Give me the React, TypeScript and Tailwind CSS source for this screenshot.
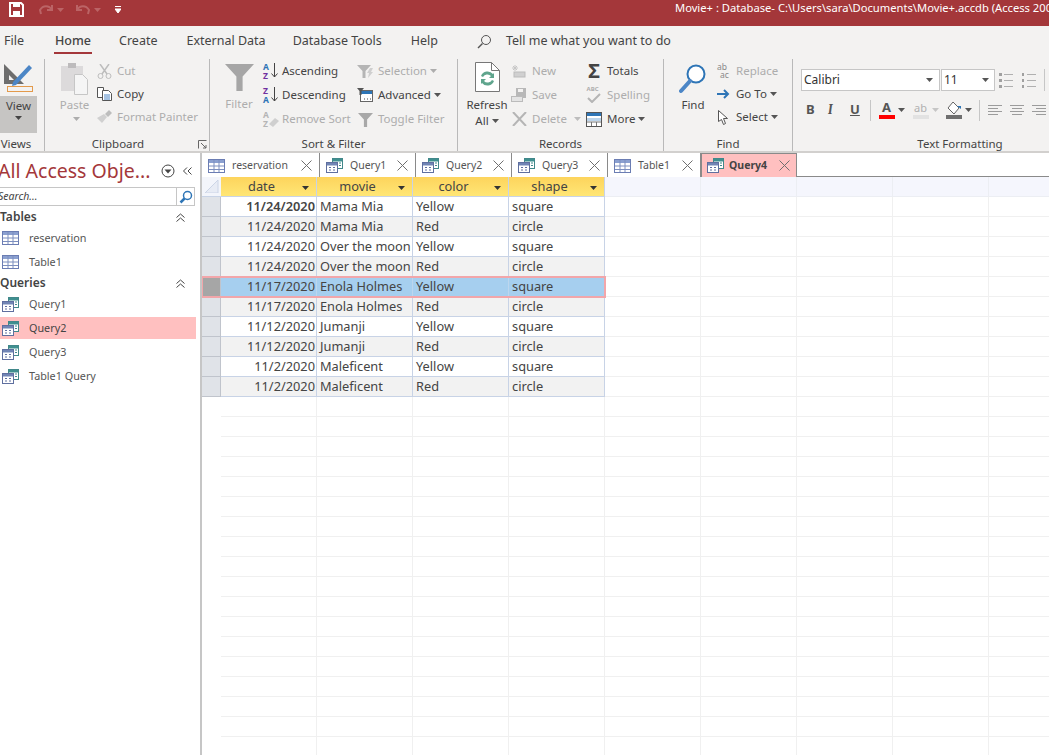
import React from 'react';

const Caret = ({ c = '#555' }: { c?: string }) => (
  <svg width="7" height="4" viewBox="0 0 7 4" className="ml-[3px] shrink-0"><path d="M0 0h7L3.500 4z" fill={c} /></svg>
);

const SaveIcon = () => (
  <svg width="15" height="15" viewBox="0 0 15 15" className="shrink-0"><path d="M1 1h11l2 2v11H1z" fill="none" stroke="#fff" strokeWidth="2" /><path d="M4 1h7v4H4z" fill="#fff" /><path d="M4 9h7v5H4z" fill="#fff" /></svg>
);

const TableIcon = () => (
  <svg width="17" height="14" viewBox="0 0 17 14" className="shrink-0">
    <rect x=".5" y=".5" width="16" height="13" fill="#fff" stroke="#6b7db3" />
    <rect x="1" y="1" width="15" height="3" fill="#8ba0d0" />
    <path d="M1 7h15M1 10.500h15M6 1v12M11 1v12" stroke="#7d8fbf" strokeWidth="1" fill="none" />
  </svg>
);

const QueryIcon = () => (
  <svg width="17" height="15" viewBox="0 0 17 15" className="shrink-0">
    <rect x="6.500" y=".5" width="10" height="10" fill="#fff" stroke="#41888a" />
    <rect x="7" y="1" width="9" height="2.500" fill="#3f8f8f" />
    <path d="M9 5h2M13 5h2M9 7.500h2M13 7.500h2" stroke="#41888a" />
    <rect x=".5" y="4.500" width="11" height="10" fill="#fff" stroke="#5f6f9f" />
    <rect x="1" y="5" width="10" height="2.500" fill="#7185b5" />
    <path d="M3 9.500h2M7 9.500h2M3 12h2M7 12h2" stroke="#5f6f9f" />
  </svg>
);

const CloseX = () => (
  <svg width="11" height="11" viewBox="0 0 11 11" className="shrink-0"><path d="M.5.5l10 10M10.500.5l-10 10" stroke="#6f6f6f" strokeWidth="1" fill="none" /></svg>
);

const AZ = ({ top, bot, arrow = true, faded = false }: { top: string; bot: string; arrow?: boolean; faded?: boolean }) => (
  <span className="relative ml-[3px] flex h-[18px] w-[15px] shrink-0 flex-col text-[8.500px] font-bold leading-[9px]">
    <span className={faded ? 'text-[#b5b5b5]' : top === 'A' ? 'text-[#2e75b6]' : 'text-[#7030a0]'}>{top}</span>
    <span className={faded ? 'text-[#b5b5b5]' : bot === 'A' ? 'text-[#2e75b6]' : 'text-[#7030a0]'}>{bot}</span>
    {arrow ? (
      <svg width="7" height="15" viewBox="0 0 7 15" className="absolute left-[8px] top-[1px]"><path d="M3.500 0v14M.5 10.500l3 3.500 3-3.500" stroke="#444" fill="none" /></svg>
    ) : (
      <svg width="10" height="9" viewBox="0 0 10 9" className="absolute left-[6px] top-[8px]"><path d="M0 6l6-6 4 3-6 6z" fill="#cfcfcf" /></svg>
    )}
  </span>
);

const Funnel = ({ size = 14, c = '#a6a6a6' }: { size?: number; c?: string }) => (
  <svg width={size} height={size} viewBox="0 0 14 14" className="shrink-0"><path d="M0 1h14L8.500 7v7h-3V7z" fill={c} /></svg>
);

const Row = ({ icon, label, disabled = false, caret = false }: { icon: React.ReactNode; label: string; disabled?: boolean; caret?: boolean }) => (
  <div className={`flex h-[24px] items-center gap-[4px] ${disabled ? 'text-[#adadad]' : 'text-[#444]'}`}>
    <span className="flex w-[18px] shrink-0 justify-center">{icon}</span>
    <span className="flex items-center whitespace-nowrap">
      {label}
      {caret && <Caret c={disabled ? '#adadad' : '#555'} />}
    </span>
  </div>
);

const Group = ({ label, w, children, launcher = false, labelPad = '' }: { label: string; w: string; children: React.ReactNode; launcher?: boolean; labelPad?: string }) => (
  <div className={`flex h-full shrink-0 flex-col border-r border-[#b9b9b9] ${w}`}>
    <div className="flex h-[77px] shrink-0">{children}</div>
    <div className={`relative flex h-[15px] shrink-0 items-center justify-center text-[11.500px] text-[#444] ${labelPad}`}>
      {label}
      {launcher && (
        <svg width="9" height="9" viewBox="0 0 9 9" className="absolute right-[2px] top-[4px]"><path d="M.5 8.500v-8h8M3 3l5 5M8 5v3H5" stroke="#666" fill="none" /></svg>
      )}
    </div>
  </div>
);

const rows: [string, string, string, string][] = [
  ['11/24/2020', 'Mama Mia', 'Yellow', 'square'],
  ['11/24/2020', 'Mama Mia', 'Red', 'circle'],
  ['11/24/2020', 'Over the moon', 'Yellow', 'square'],
  ['11/24/2020', 'Over the moon', 'Red', 'circle'],
  ['11/17/2020', 'Enola Holmes', 'Yellow', 'square'],
  ['11/17/2020', 'Enola Holmes', 'Red', 'circle'],
  ['11/12/2020', 'Jumanji', 'Yellow', 'square'],
  ['11/12/2020', 'Jumanji', 'Red', 'circle'],
  ['11/2/2020', 'Maleficent', 'Yellow', 'square'],
  ['11/2/2020', 'Maleficent', 'Red', 'circle'],
];

const tabs = [
  { n: 'reservation', w: 'w-[118px]', t: true },
  { n: 'Query1', w: 'w-[96px]' },
  { n: 'Query2', w: 'w-[96px]' },
  { n: 'Query3', w: 'w-[96px]' },
  { n: 'Table1', w: 'w-[93px]', t: true },
];

const NavItem = ({ label, table = false, active = false, h = 'h-[24px]' }: { label: string; table?: boolean; active?: boolean; h?: string }) => (
  <div className={`flex ${h} w-[196px] items-center gap-[10px] pl-[2px] text-[10.800px] ${active ? 'bg-[#ffc0c0] text-[#444]' : 'text-[#555]'}`}>
    {table ? <TableIcon /> : <QueryIcon />}
    <span>{label}</span>
  </div>
);

const Chevrons = () => (
  <svg width="9" height="9" viewBox="0 0 9 9" className="mr-[11px]"><path d="M.5 4.500l4-3.500 4 3.500M.5 8.500l4-3.500 4 3.500" fill="none" stroke="#444" /></svg>
);

const cols = [0, 1, 2, 3, 4];

export default function App() {
  return (
    <div className="flex h-[755px] w-[1049px] flex-col overflow-hidden bg-white font-['Noto_Sans','Open_Sans',sans-serif] text-[12px] text-[#444]">
      {/* Title bar */}
      <div className="flex h-[26px] shrink-0 items-start justify-between overflow-hidden bg-[#a4373a] pl-[9px]">
        <div className="flex items-center pt-[2px]">
          <SaveIcon />
          <svg width="16" height="13" viewBox="0 0 16 13" className="ml-[14px]"><path d="M14 2v5H9M14 7C11 2 5 2 2 7l1 4" fill="none" stroke="#bb6466" strokeWidth="2" /></svg>
          <Caret c="#bb6466" />
          <svg width="16" height="13" viewBox="0 0 16 13" className="ml-[11px]"><path d="M2 2v5h5M2 7c3-5 9-5 12 0l-1 4" fill="none" stroke="#bb6466" strokeWidth="2" /></svg>
          <Caret c="#bb6466" />
          <svg width="6" height="7" viewBox="0 0 6 7" className="ml-[14px]"><path d="M0 .5h6M0 3h6L3 7z" stroke="#fff" fill="#fff" strokeWidth="1" /></svg>
        </div>
        <div className="w-[374px] shrink-0 overflow-hidden whitespace-nowrap text-[11.200px] leading-[15px] text-white">Movie+ : Database- C:\Users\sara\Documents\Movie+.accdb (Access 2007 - 2016 file format)</div>
      </div>

      {/* Ribbon tabs */}
      <div className="flex h-[30px] shrink-0 items-center bg-[#f3f2f1] text-[12.500px] text-[#444]">
        <span className="ml-[4px]">File</span>
        <span className="relative ml-[31px] font-medium">Home<span className="absolute -bottom-[4px] -left-[1px] -right-[1px] h-[2px] bg-[#a4373a]" /></span>
        <span className="ml-[28px]">Create</span>
        <span className="ml-[29px]">External Data</span>
        <span className="ml-[27px]">Database Tools</span>
        <span className="ml-[29px]">Help</span>
        <svg width="15" height="15" viewBox="0 0 15 15" className="ml-[39px]"><circle cx="9" cy="6" r="4.500" fill="none" stroke="#555" /><path d="M5.500 9.500L1 14" stroke="#555" strokeWidth="1.500" /></svg>
        <span className="ml-[14px]">Tell me what you want to do</span>
      </div>

      {/* Ribbon */}
      <div className="flex h-[97px] shrink-0 overflow-hidden border-b-2 border-[#d2d0ce] bg-[#f3f2f1] pt-[3px] text-[11.500px]">
        <Group label="Views" w="w-[45px]" labelPad="pr-[12px]">
          <div className="flex w-[37px] flex-col items-center">
            <svg width="32" height="32" viewBox="0 0 32 32" className="-ml-[2px] mt-[3px] shrink-0">
              <path d="M2 2v20h20z" fill="#6d6d6d" /><path d="M7 13v5h5z" fill="#f3f2f1" />
              <path d="M11 20L27 3l3 3L14 23l-4 1z" fill="#4c86c6" />
              <rect x="5.500" y="24.500" width="25" height="5" fill="none" stroke="#e39a4b" />
            </svg>
            <div className="mt-[2px] flex h-[37px] w-[37px] shrink-0 flex-col items-center bg-[#c6c5c3] pt-[1px] text-[#444]">
              <span>View</span>
              <svg width="7" height="4" viewBox="0 0 7 4" className="mt-[2px]"><path d="M0 0h7L3.500 4z" fill="#444" /></svg>
            </div>
          </div>
        </Group>

        <Group label="Clipboard" w="w-[165px]" launcher labelPad="pr-[18px]">
          <div className="ml-[10px] flex w-[39px] flex-col items-center text-[#adadad]">
            <svg width="29" height="32" viewBox="0 0 29 32" className="mt-[4px] shrink-0">
              <rect x="1" y="3" width="22" height="25" fill="#dcdadb" /><rect x="8" y="0" width="8" height="5" fill="#bdbbbc" />
              <path d="M14.500 11.500h8l5 5v15h-13z" fill="#f5f5f5" stroke="#c6c6c6" />
            </svg>
            <span className="mt-[1px]">Paste</span>
            <span className="mt-[4px]"><Caret c="#adadad" /></span>
          </div>
          <div className="ml-[1px] flex flex-col">
            <Row disabled label="Cut" icon={<svg width="15" height="15" viewBox="0 0 15 15"><path d="M3 0l7 10M12 0L5 10" stroke="#bdbdbd" strokeWidth="1.500" /><circle cx="3.500" cy="12" r="2.500" fill="none" stroke="#bdbdbd" /><circle cx="11.500" cy="12" r="2.500" fill="none" stroke="#bdbdbd" /></svg>} />
            <div className="-mt-[1px]"><Row label="Copy" icon={<svg width="15" height="14" viewBox="0 0 15 14"><path d="M.5.5h6v10h-6z" fill="#fff" stroke="#555" /><path d="M5.500 3.500h6l3 3v7h-9z" fill="#fff" stroke="#555" /><path d="M7 8h6M7 10h6M7 12h6" stroke="#4c86c6" /></svg>} /></div>
            <div className="-mt-[1px]"><Row disabled label="Format Painter" icon={<svg width="16" height="14" viewBox="0 0 16 14"><path d="M1 8l5 5 5-6-3-3z" fill="#d0d0d0" /><path d="M9 4l4-4 3 3-4 4z" fill="#bdbdbd" /></svg>} /></div>
          </div>
        </Group>

        <Group label="Sort & Filter" w="w-[248px]">
          <div className="ml-[14px] flex w-[30px] flex-col items-center text-[#adadad]">
            <span className="mt-[3px] flex"><Funnel size={29} /></span>
            <span className="mt-[4px]">Filter</span>
          </div>
          <div className="ml-[6px] flex w-[95px] flex-col">
            <Row label="Ascending" icon={<AZ top="A" bot="Z" />} />
            <Row label="Descending" icon={<AZ top="Z" bot="A" />} />
            <Row disabled label="Remove Sort" icon={<AZ top="A" bot="Z" arrow={false} faded />} />
          </div>
          <div className="ml-[1px] flex flex-col">
            <Row disabled caret label="Selection" icon={<span className="relative block h-[14px] w-[16px]"><Funnel c="#b5b5b5" /><svg width="6" height="10" viewBox="0 0 6 10" className="absolute left-[10px] top-[4px]"><path d="M3 0L0 5h2L1 10l5-6H4l2-4z" fill="#cfcfcf" /></svg></span>} />
            <Row caret label="Advanced" icon={<svg width="16" height="15" viewBox="0 0 16 15"><rect x="3.500" y="2.500" width="12" height="11" fill="#fff" stroke="#666" /><rect x="4" y="3" width="11" height="3" fill="#2e75b6" /><path d="M0 0h7L4.500 3v4h-2V3z" fill="#555" /><path d="M7 11h1M10 11h1M13 11h1" stroke="#444" /></svg>} />
            <Row disabled label="Toggle Filter" icon={<Funnel size={15} c="#a8a8a8" />} />
          </div>
        </Group>

        <Group label="Records" w="w-[206px]">
          <div className="ml-[10px] flex w-[38px] flex-col items-center">
            <svg width="25" height="30" viewBox="0 0 25 30" className="mt-[3px] shrink-0"><path d="M.5.500h16l8 8v21H.5z" fill="#fff" stroke="#777" /><path d="M16.500.5v8h8" fill="none" stroke="#777" /><path d="M6 14a7 7 0 0 1 12-2l1-1v5h-5l2-2a5 5 0 0 0-8 1zM19 19a7 7 0 0 1-12 2l-1 1v-5h5l-2 2a5 5 0 0 0 8-1z" fill="#5fa58d" /></svg>
            <span className="mt-[5px] leading-[16px]">Refresh</span>
            <span className="flex items-center leading-[16px]">All<Caret /></span>
          </div>
          <div className="ml-[4px] flex w-[75px] flex-col">
            <Row disabled label="New" icon={<svg width="14" height="13" viewBox="0 0 14 13"><rect x="2" y="7" width="11" height="5" fill="#d0d0d0" stroke="#bbb" /><path d="M3 0v6M0 3h6M1 1l4 4M5 1L1 5" stroke="#c6c6c6" /></svg>} />
            <Row disabled label="Save" icon={<svg width="16" height="15" viewBox="0 0 16 15"><rect x="5" y="0" width="10" height="10" fill="#b8b8b8" /><rect x="7" y="1" width="5" height="3" fill="#f3f2f1" /><rect x=".5" y="8.500" width="11" height="5" fill="#e4e4e4" stroke="#bbb" /></svg>} />
            <div className="relative"><Row disabled label="Delete" icon={<svg width="15" height="14" viewBox="0 0 15 14"><path d="M1 0l13 14M14 0L1 14" stroke="#b5b5b5" strokeWidth="2" /></svg>} /><span className="absolute left-[61px] top-[10px]"><Caret c="#bdbdbd" /></span></div>
          </div>
          <div className="flex flex-col">
            <Row label="Totals" icon={<span className="text-[20px] font-bold leading-none text-[#444]">Σ</span>} />
            <Row disabled label="Spelling" icon={<span className="relative block h-[16px] w-[15px]"><span className="absolute -top-[2px] left-0 text-[6px] font-bold">ABC</span><svg width="14" height="10" viewBox="0 0 14 10" className="absolute left-0 top-[6px]"><path d="M1 5l4 4 8-8" fill="none" stroke="#b5b5b5" strokeWidth="2" /></svg></span>} />
            <Row caret label="More" icon={<svg width="16" height="15" viewBox="0 0 16 15"><rect x=".5" y=".5" width="15" height="14" fill="#fff" stroke="#555" /><rect x="1" y="1" width="14" height="3" fill="#2e75b6" /><rect x="1" y="6" width="14" height="3" fill="#bcd4ea" /><path d="M1 10h14M5.500 10v4M10.500 10v4" stroke="#777" /></svg>} />
          </div>
        </Group>

        <Group label="Find" w="w-[129px]">
          <div className="ml-[14px] flex w-[30px] flex-col items-center">
            <svg width="28" height="31" viewBox="0 0 28 31" className="mt-[4px] shrink-0"><circle cx="17" cy="11" r="8.500" fill="#fff" stroke="#2e75b6" strokeWidth="2" /><path d="M11 18L2 28" stroke="#4c86c6" strokeWidth="4" strokeLinecap="round" /></svg>
            <span className="mt-[2px]">Find</span>
          </div>
          <div className="ml-[6px] flex flex-col">
            <Row disabled label="Replace" icon={<span className="flex h-[17px] flex-col text-[8.500px] leading-[8.500px] text-[#888]"><span>ab</span><span className="ml-[3px]">ac</span></span>} />
            <div className="-mt-[1px]"><Row caret label="Go To" icon={<svg width="13" height="10" viewBox="0 0 13 10"><path d="M0 5h11M7 1l4 4-4 4" fill="none" stroke="#2e75b6" strokeWidth="2" /></svg>} /></div>
            <div className="-mt-[1px]"><Row caret label="Select" icon={<svg width="10" height="15" viewBox="0 0 10 15"><path d="M.5.500v11l3-2 2 5 2-1-2-5h4z" fill="#fff" stroke="#555" /></svg>} /></div>
          </div>
        </Group>

        <Group label="Text Formatting" w="w-[335px]">
          <div className="ml-[8px] flex flex-col">
            <div className="mt-[9px] flex h-[23px] items-center">
              <div className="flex h-[22px] w-[139px] items-center justify-between border border-[#c6c6c6] bg-white pl-[2px] pr-[6px] text-[12px] text-[#333]">Calibri<Caret /></div>
              <div className="ml-[1px] flex h-[22px] w-[54px] items-center justify-between border border-[#c6c6c6] bg-white pl-[2px] pr-[5px] text-[12px] text-[#333]">11<Caret /></div>
              <svg width="14" height="16" viewBox="0 0 14 16" className="ml-[4px]"><path d="M5 2.500h9M5 8.500h9M5 14.500h9" stroke="#b0b0b0" /><path d="M0 2.500h3M0 8.500h3M0 14.500h3" stroke="#a0a0a0" strokeWidth="3" /></svg>
              <svg width="14" height="16" viewBox="0 0 14 16" className="ml-[9px]"><path d="M5 2.500h9M5 8.500h9M5 14.500h9" stroke="#b0b0b0" /><path d="M1 1v3M1 7v3M1 13v3" stroke="#a0a0a0" strokeWidth="2" /></svg>
              <div className="ml-[8px] h-[22px] border-l border-[#c6c6c6]" />
            </div>
            <div className="mt-[8px] flex h-[22px] items-center text-[13px] text-[#555]">
              <span className="ml-[5px] w-[22px] font-bold">B</span>
              <span className="w-[22px] font-serif font-bold italic">I</span>
              <span className="w-[20px] font-bold underline">U</span>
              <span className="mr-[7px] h-[21px] border-l border-[#c6c6c6]" />
              <span className="flex w-[17px] flex-col items-center leading-[13px]"><span className="font-bold text-[#555]">A</span><span className="mt-[1px] h-[4px] w-[16px] bg-[#f00]" /></span>
              <Caret />
              <span className="ml-[7px] flex w-[17px] flex-col items-center leading-[13px] text-[#b0b0b0]"><span className="text-[11px]">ab</span><span className="mt-[1px] h-[4px] w-[16px] bg-[#e2e2e2]" /></span>
              <Caret c="#c6c6c6" />
              <span className="ml-[7px] flex w-[16px] flex-col items-center"><svg width="16" height="13" viewBox="0 0 16 13"><path d="M7 0l6 6-5 6-6-6z" fill="#fff" stroke="#666" /><path d="M11 4h4v3z" fill="#2e75b6" /></svg><span className="h-[4px] w-[16px] bg-[#6f6f6f]" /></span>
              <Caret />
              <span className="ml-[7px] mr-[8px] h-[21px] border-l border-[#c6c6c6]" />
              <svg width="14" height="11" viewBox="0 0 14 11"><path d="M0 .5h14M0 3.500h10M0 6.500h14M0 9.500h10" stroke="#9c9c9c" /></svg>
              <svg width="14" height="11" viewBox="0 0 14 11" className="ml-[8px]"><path d="M0 .5h14M2 3.500h10M0 6.500h14M2 9.500h10" stroke="#9c9c9c" /></svg>
              <svg width="14" height="11" viewBox="0 0 14 11" className="ml-[8px]"><path d="M0 .5h14M4 3.500h10M0 6.500h14M4 9.500h10" stroke="#9c9c9c" /></svg>
            </div>
          </div>
        </Group>
      </div>

      {/* Main */}
      <div className="flex min-h-0 flex-1">
        {/* Navigation pane */}
        <div className="w-[202px] shrink-0 overflow-hidden border-r-2 border-[#c6c6c6] pt-[3px]">
          <div className="flex h-[29px] items-center text-[#444]">
            <span className="-ml-[2px] w-[160px] shrink-0 whitespace-nowrap text-[19.500px] text-[#a4373a]">All Access Obje...</span>
            <svg width="14" height="14" viewBox="0 0 14 14" className="ml-[3px]"><circle cx="7" cy="7" r="6" fill="none" stroke="#444" /><path d="M3.500 5.500h7L7 9.500z" fill="#444" /></svg>
            <svg width="9" height="8" viewBox="0 0 9 8" className="ml-[8px]"><path d="M4 .5L.5 4 4 7.500M8.500.5L5 4l3.500 3.500" fill="none" stroke="#444" /></svg>
          </div>
          <div className="mt-[2px] flex h-[19px] w-[195px] items-center justify-between overflow-hidden border border-l-0 border-[#c6c6c6] bg-white">
            <span className="-ml-[2px] text-[10.500px] italic text-[#444]">Search...</span>
            <span className="flex h-full w-[18px] items-center justify-center border-l border-[#c6c6c6]">
              <svg width="14" height="14" viewBox="0 0 14 14"><circle cx="8.500" cy="5.500" r="4" fill="#fff" stroke="#2e75b6" strokeWidth="1.500" /><path d="M5.500 8.500L1.500 12.500" stroke="#2e75b6" strokeWidth="2.500" /></svg>
            </span>
          </div>
          <div className="mt-[2px] flex h-[18px] w-[196px] items-center justify-between font-semibold text-[#444]">Tables<Chevrons /></div>
          <NavItem table label="reservation" />
          <NavItem table label="Table1" />
          <div className="-mb-[2px] -mt-[1px] flex h-[20px] w-[196px] items-center justify-between font-semibold text-[#444]">Queries<Chevrons /></div>
          <div className="h-[1px]" />
          <NavItem label="Query1" />
          <NavItem label="Query2" active h="h-[22px] my-[1px]" />
          <NavItem label="Query3" />
          <NavItem label="Table1 Query" />
        </div>

        {/* Document area */}
        <div className="flex min-w-0 flex-1 flex-col overflow-hidden">
          <div className="flex h-[24px] shrink-0 text-[10.500px] text-[#555]">
            {tabs.map((t) => (
              <div key={t.n} className={`flex ${t.w} items-center justify-between border-r border-[#8a8a8a] pl-[6px] pr-[7px] pt-[1px]`}>
                <span className="flex items-center gap-[7px]">{t.t ? <TableIcon /> : <QueryIcon />}{t.n}</span>
                <CloseX />
              </div>
            ))}
            <div className="flex w-[96px] items-center justify-between border-x border-t border-[#8a8a8a] bg-[#ffc0c0] pl-[5px] pr-[6px] font-bold text-[#444]">
              <span className="flex items-center gap-[5px]"><QueryIcon />Query4</span>
              <CloseX />
            </div>
            <div className="min-w-0 flex-1 border-b border-[#8a8a8a]" />
          </div>

          {/* Datasheet */}
          <div className="min-h-0 flex-1 text-[12.800px] text-[#444]">
            <div className="flex h-[20px]">
              <div className="flex w-[19px] shrink-0 items-center justify-center border-b border-[#c8d3e6] bg-[#f3f5fb]">
                <svg width="14" height="13" viewBox="0 0 14 13"><path d="M13 0v13H0z" fill="#e8ecf5" stroke="#ccd5e6" /></svg>
              </div>
              {['date', 'movie', 'color', 'shape'].map((h) => (
                <div key={h} className="relative flex w-[96px] shrink-0 items-center justify-center border-r border-b border-[#c8d3e6] bg-gradient-to-b from-[#fdd45c] to-[#ffe675] pr-[14px]">
                  {h}
                  <svg width="7" height="4" viewBox="0 0 7 4" className="absolute right-[7px] top-[9px]"><path d="M0 0h7L3.500 4z" fill="#333" /></svg>
                </div>
              ))}
              {cols.map((c) => (
                <div key={c} className="w-[96px] shrink-0 border-r border-b border-[#eceef3] bg-[#f5f6fd]" />
              ))}
            </div>
            {rows.map((r, i) => {
              const sel = i === 4;
              const bg = sel ? 'bg-[#a6cfef]' : i % 2 ? 'bg-[#f2f2f2]' : 'bg-white';
              const edge = sel ? 'border-[#bcd6ee]' : 'border-[#c8d3e6]';
              return (
                <div key={i} className="flex h-[20px]">
                  <div className={`relative flex w-[403px] shrink-0 ${sel ? 'z-20 outline-2 -outline-offset-1 outline-[#f2a6aa]' : 'z-10'}`}>
                    <div className={`w-[19px] shrink-0 border-r border-b border-[#c0c4cc] ${sel ? 'bg-[#a6a6a6]' : 'bg-[#e0e3e8]'}`} />
                    <div className={`flex w-[96px] shrink-0 items-center justify-end overflow-hidden border-r border-b ${edge} ${bg} pr-[1px] pt-[1px] ${i === 0 ? 'font-semibold' : ''}`}>{r[0]}</div>
                    {[r[1], r[2], r[3]].map((v, j) => (
                      <div key={j} className={`flex w-[96px] shrink-0 items-center overflow-hidden whitespace-nowrap border-r border-b ${edge} ${bg} pl-[3px] pt-[1px]`}>{v}</div>
                    ))}
                  </div>
                  {cols.map((c) => (
                    <div key={c} className="w-[96px] shrink-0 border-r border-b border-[#f0f0f0]" />
                  ))}
                </div>
              );
            })}
            {Array.from({ length: 18 }, (_, i) => (
              <div key={i} className="flex h-[20px]">
                <div className="w-[19px] shrink-0" />
                {[0, 1, 2, 3, 4, 5, 6, 7, 8].map((c) => (
                  <div key={c} className="w-[96px] shrink-0 border-r border-b border-[#f0f0f0]" />
                ))}
              </div>
            ))}
          </div>
        </div>
      </div>
    </div>
  );
}
